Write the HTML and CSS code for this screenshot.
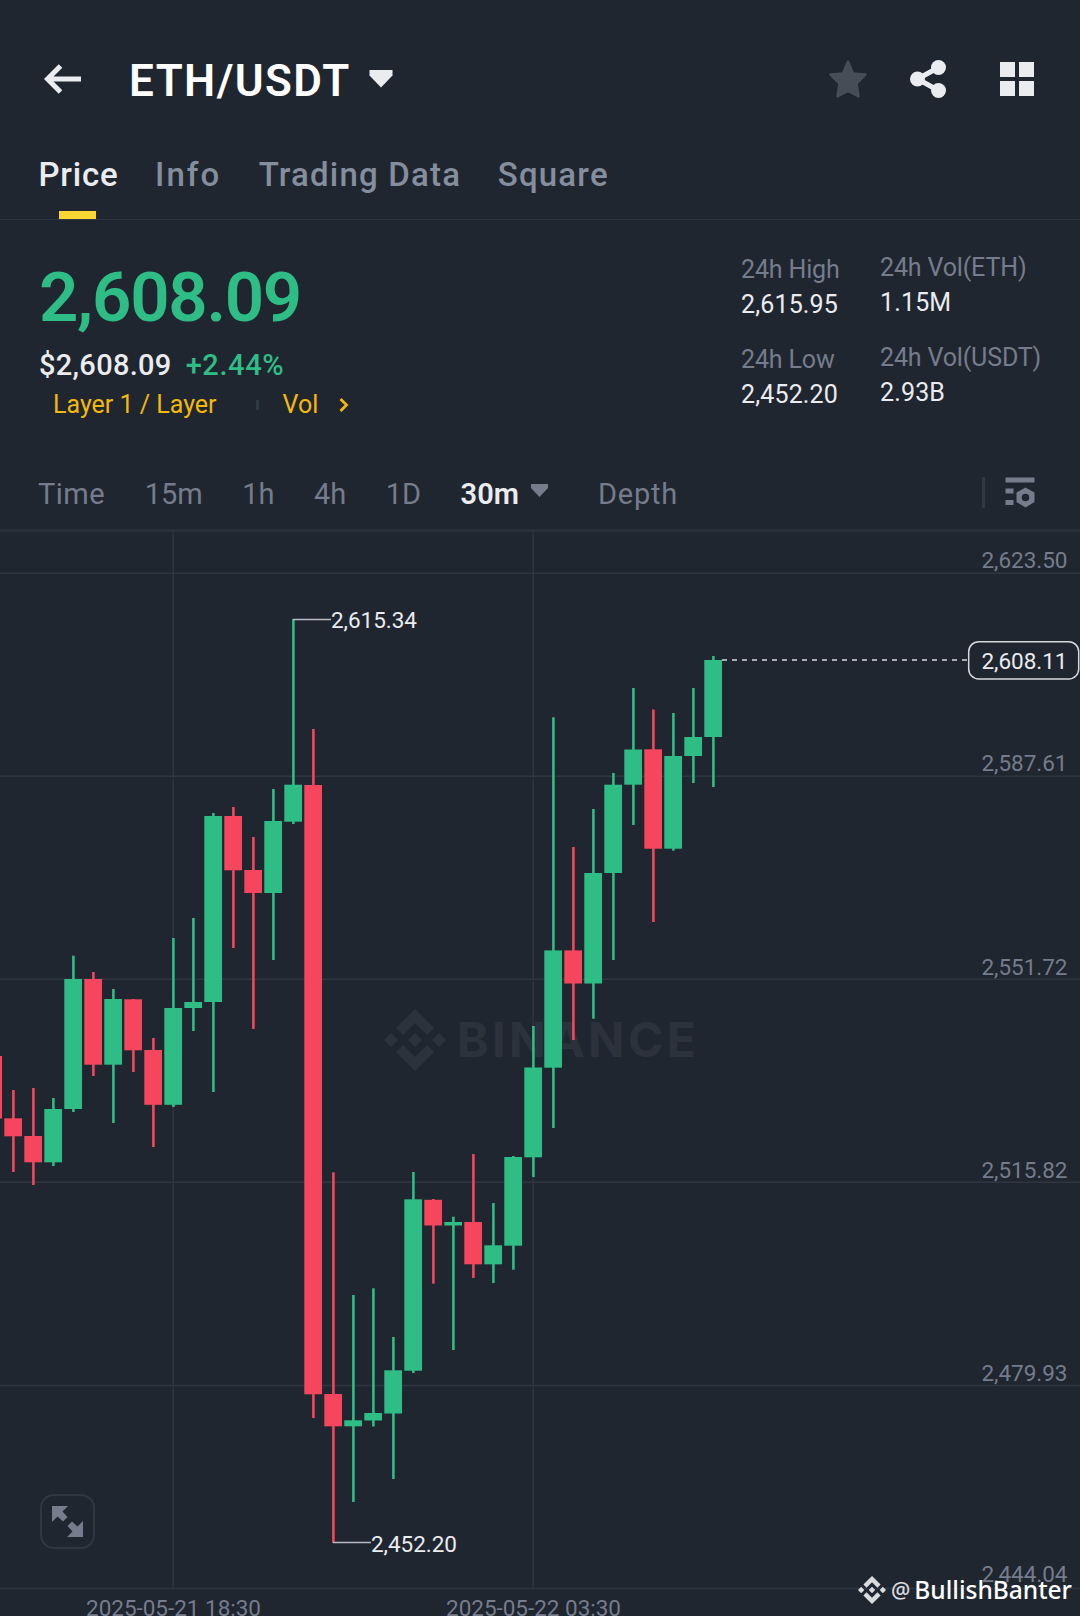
FILE: index.html
```html
<!DOCTYPE html>
<html lang="en">
<head>
    <meta charset="UTF-8">
    <meta name="viewport" content="width=device-width, initial-scale=1.0">
    <title>ETH/USDT</title>
    <link rel="stylesheet" href="styles.css">
</head>
<body>
    <header class="topbar">
        <svg class="back" width="38" height="30" viewBox="0 0 38 30">
            <path d="M37 15H4M16.500 2L3.500 15L16.500 28" fill="none" stroke="#eaecef" stroke-width="5"/>
        </svg>
        <h1>ETH/USDT</h1>
        <svg class="caret" width="24" height="18" viewBox="0 0 24 18">
            <path d="M0.500 0H23.500V5.500L12 17.500L0.500 5.500Z" fill="#eaecef"/>
        </svg>
        <div class="actions">
            <svg width="38" height="38" viewBox="0 0 38 38">
                <path d="M19 1.500L24 13.500L36.500 14.500L27.500 23.500L29.500 36.500L19 31L8.500 36.500L10.500 23.500L1.500 14.500L14 13.500Z" fill="#474d57" stroke="#474d57" stroke-width="2.500" stroke-linejoin="round"/>
            </svg>
            <svg width="36" height="38" viewBox="0 0 36 38">
                <path d="M28.500 7.500L7.500 19L28.500 30.500" fill="none" stroke="#eaecef" stroke-width="5"/>
                <circle cx="28.500" cy="7.500" r="7.500" fill="#eaecef"/>
                <circle cx="7.500" cy="19" r="7.500" fill="#eaecef"/>
                <circle cx="28.500" cy="30.500" r="7.500" fill="#eaecef"/>
            </svg>
            <svg width="34" height="34" viewBox="0 0 34 34">
                <path d="M0 0H15V15H0ZM19 0H34V15H19ZM0 19H15V34H0ZM19 19H34V34H19Z" fill="#eaecef"/>
            </svg>
        </div>
    </header>

    <nav class="tabs">
        <a class="active">Price</a>
        <a class="info">Info</a>
        <a>Trading Data</a>
        <a>Square</a>
    </nav>

    <section class="summary">
        <div class="quote">
            <div class="last">2,608.09</div>
            <div class="fiat"><span>$2,608.09</span><span class="change">+2.44%</span></div>
            <div class="tags">
                <span>Layer 1 / Layer</span>
                <i class="divider"></i>
                <span>Vol</span>
                <svg width="10" height="14" viewBox="0 0 10 14">
                    <path d="M1.500 1L7.500 7L1.500 13" fill="none" stroke="#f0b90b" stroke-width="2.800"/>
                </svg>
            </div>
        </div>
        <div class="stats">
            <dl>
                <dt>24h High</dt>
                <dd>2,615.95</dd>
                <dt>24h Low</dt>
                <dd>2,452.20</dd>
            </dl>
            <dl class="volume">
                <dt>24h Vol(ETH)</dt>
                <dd>1.15M</dd>
                <dt>24h Vol(USDT)</dt>
                <dd>2.93B</dd>
            </dl>
        </div>
    </section>

    <nav class="intervals">
        <a class="time">Time</a>
        <a>15m</a>
        <a>1h</a>
        <a>4h</a>
        <a>1D</a>
        <a class="active">30m
            <svg width="17" height="13" viewBox="0 0 17 13"><path d="M0 0H17V4L8.500 13L0 4Z" fill="#757c8b"/></svg>
        </a>
        <a class="depth">Depth</a>
        <div class="settings">
            <svg width="30" height="31" viewBox="0 0 30 31">
                <path d="M0.500 0.500H29.500V5.500H0.500ZM0.500 11.500H8.500V16.500H0.500ZM0.500 23H8.500V28H0.500Z" fill="#757c8b"/>
                <path d="M20.500 10.500L29.500 15.500V25L20.500 30.500L11.500 25V15.500ZM20.500 16.700A3.800 3.800 0 1 0 20.500 24.300A3.800 3.800 0 1 0 20.500 16.700Z" fill="#757c8b" fill-rule="evenodd"/>
            </svg>
        </div>
    </nav>

    <main class="chart">
        <svg id="chart" width="1080" height="1084" viewBox="0 532 1080 1084">
            <defs>
                <path id="logo" d="M38.730 53.200l24.590-24.580 24.600 24.600 14.300-14.310L63.320 0l-38.900 38.900zM0 63.310l14.300-14.310 14.310 14.310-14.310 14.300zM38.730 73.410L63.320 98l24.600-24.600 14.310 14.290-38.900 38.910-38.910-38.880zM98 63.310l14.300-14.310 14.310 14.300-14.310 14.320zM77.830 63.300L63.320 48.780 48.810 63.280l14.510 14.500z"/>
            </defs>
            <path class="grid" d="M0 573.300H1080M0 776.200H1080M0 979.300H1080M0 1182.300H1080M0 1385.500H1080M0 1588.500H1080M173.200 532V1588M533.200 532V1588"/>
            <g class="watermark">
                <use href="#logo" transform="translate(384 1009) scale(0.490)"/>
                <text x="457" y="1057" textLength="239">BINANCE</text>
            </g>
            <g id="candles"></g>
            <path class="dash" d="M722 660H968"/>
            <path class="pointer" d="M293 619.500H331M333 1542.500H371"/>
            <rect class="pill" x="968.700" y="641.700" width="110" height="37.300" rx="10"/>
            <g class="marks">
                <text x="331" y="628" textLength="86">2,615.34</text>
                <text x="371" y="1552" textLength="86">2,452.20</text>
                <text x="981.500" y="669" textLength="86">2,608.11</text>
            </g>
            <g class="axis">
                <text x="981.500" y="568" textLength="86">2,623.50</text>
                <text x="981.500" y="771" textLength="86">2,587.61</text>
                <text x="981.500" y="974.500" textLength="86">2,551.72</text>
                <text x="981.500" y="1178" textLength="86">2,515.82</text>
                <text x="981.500" y="1381" textLength="86">2,479.93</text>
                <text x="981.500" y="1582" textLength="86">2,444.04</text>
                <text x="86" y="1616" textLength="175">2025-05-21 18:30</text>
                <text x="446" y="1616" textLength="175">2025-05-22 03:30</text>
            </g>
            <g class="expand">
                <rect x="41" y="1495" width="53" height="53" rx="13"/>
                <path d="M52 1506H68L62.500 1511.500L67.500 1517L63 1521.500L57.500 1516.500L52 1522ZM83 1537H67L72.500 1531.500L67.500 1526L72 1521.500L77.500 1526.500L83 1521Z"/>
            </g>
        </svg>
        <div class="author">
            <svg width="28" height="28" viewBox="0 0 126.600 126.600"><use href="#logo"/></svg>
            <span class="at">@</span>
            <span>BullishBanter</span>
        </div>
    </main>

    <script src="chart.js"></script>
</body>
</html>
```
FILE: styles.css
```css
* {
    box-sizing: border-box;
}

body {
    margin: 0;
    width: 1080px;
    height: 1616px;
    overflow: hidden;
    background: #202630;
    color: #eaecef;
    font-family: Roboto, "Liberation Sans", sans-serif;
}

svg {
    display: block;
    flex: none;
}

.topbar {
    display: flex;
    align-items: center;
    height: 160px;
    padding: 0 46px 2px 44px;
}

.topbar h1 {
    margin: 4px 0 0 47px;
    color: #fff;
    font-size: 44px;
    font-weight: 600;
    letter-spacing: 1.4px;
    line-height: 52px;
}

.caret {
    margin-left: 18px;
}

.actions {
    display: flex;
    align-items: center;
    margin-left: auto;
}

.actions svg:nth-child(2) {
    margin: 0 54px 0 43px;
}

/* page tabs */
.tabs {
    display: flex;
    gap: 36.5px;
    height: 60px;
    padding-left: 38.5px;
    border-bottom: 1px solid #2f3641;
    color: #848e9c;
    font-size: 33px;
    font-weight: 500;
    letter-spacing: 1.2px;
    line-height: 29px;
}

.tabs a {
    position: relative;
    height: 59px;
}

.tabs .active {
    color: #eaecef;
    letter-spacing: 0.8px;
}

.tabs .info {
    margin-right: 1px;
    letter-spacing: 2px;
}

.tabs .active::after {
    content: "";
    position: absolute;
    left: 20.5px;
    bottom: 0;
    width: 37px;
    height: 8px;
    background: #fcd535;
}

/* price summary */
.summary {
    display: flex;
    justify-content: space-between;
    height: 239px;
    padding: 40px 39px 0 39px;
}

.last {
    color: #2ebd85;
    font-size: 69px;
    font-weight: 600;
    line-height: 76px;
    letter-spacing: -1.3px;
}

.fiat {
    display: flex;
    gap: 14px;
    margin-top: 12px;
    font-size: 29px;
    font-weight: 500;
    letter-spacing: 0.3px;
    line-height: 34px;
}

.change {
    color: #2ebd85;
    letter-spacing: 0.6px;
}

.tags {
    display: flex;
    align-items: center;
    margin-top: 9px;
    padding-left: 14px;
    color: #f0b90b;
    font-size: 25px;
    line-height: 28px;
}

.divider {
    width: 3px;
    height: 10px;
    margin: 0 24px 0 39px;
    background: #2f3944;
}

.tags svg {
    margin-left: 21px;
}

.stats {
    display: flex;
    gap: 41px;
    margin-top: -8px;
    font-size: 25px;
    line-height: 35px;
}

.stats dl,
.stats dd {
    margin: 0;
}

.stats dl {
    width: 98px;
    white-space: nowrap;
}

.stats .volume {
    width: 161px;
    margin-top: -2px;
}

.stats dt {
    color: #757c8b;
    letter-spacing: -0.15px;
}

.stats dd {
    margin-bottom: 20px;
    letter-spacing: 0.15px;
}

/* interval bar */
.intervals {
    display: flex;
    align-items: center;
    gap: 39.5px;
    height: 73px;
    padding: 0 45px 0 38px;
    border-bottom: 3px solid #29303a;
    color: #757c8b;
    font-size: 29px;
    line-height: 34px;
}

.time {
    letter-spacing: 0.5px;
}

.intervals .active {
    display: flex;
    gap: 12px;
    color: #eaecef;
    font-weight: 600;
}

.intervals .active svg {
    margin-top: 7px;
}

.depth {
    margin-left: 10.5px;
    letter-spacing: 0.8px;
}

.settings {
    margin: -4px 0 0 auto;
    padding-left: 20px;
    border-left: 3px solid #2f3944;
}

/* candlestick chart */
.chart {
    position: relative;
}

.chart text {
    font-size: 22.500px;
}

.grid {
    fill: none;
    stroke: #2f3641;
    stroke-width: 1.500;
}

.watermark {
    fill: #2c323c;
}

.chart .watermark text {
    font-family: Inter, sans-serif;
    font-size: 48px;
    font-weight: 700;
}

.up {
    fill: #2ebd85;
}

.down {
    fill: #f6465d;
}

.dash {
    stroke: #d5d8dd;
    stroke-width: 1.600;
    stroke-dasharray: 5 5;
}

.pointer {
    fill: none;
    stroke: #b7bbc2;
    stroke-width: 1.600;
}

.pill {
    fill: #202630;
    stroke: #d5d8dd;
    stroke-width: 1.500;
}

.marks {
    fill: #eaecef;
}

.axis {
    fill: #757c8b;
}

.expand rect {
    fill: #202630;
    stroke: #2f3741;
    stroke-width: 2;
}

.expand path {
    fill: #757c8b;
}

.author {
    position: absolute;
    right: 8px;
    bottom: 9px;
    display: flex;
    align-items: center;
    color: #fff;
    font-family: "Noto Sans", sans-serif;
    font-size: 24.5px;
    font-weight: 500;
    line-height: 34px;
}

.author svg {
    fill: #d9dbde;
}

.author .at {
    margin: 0 4px 0 5px;
    color: #d9dbde;
    font-size: 21.5px;
}
```
FILE: chart.js
```js
// [direction, high, body top, body bottom, low]
const candles = [
    ['down', 1056, 1056, 1118.5, 1118.5],
    ['down', 1090, 1118.3, 1136.3, 1172],
    ['down', 1088, 1136, 1162.3, 1185],
    ['up', 1098, 1109, 1162.3, 1166],
    ['up', 955.7, 979, 1109, 1112],
    ['down', 972, 979, 1064.7, 1076],
    ['up', 989, 999, 1064.7, 1123],
    ['down', 999, 999.3, 1050.3, 1072],
    ['down', 1038, 1050, 1104.8, 1147],
    ['up', 938, 1008, 1104.8, 1107],
    ['up', 918, 1002, 1008, 1031],
    ['up', 813, 816, 1002, 1092],
    ['down', 807, 816, 870.3, 948],
    ['down', 837, 870, 893, 1029],
    ['up', 789, 821, 893, 960],
    ['up', 619, 784.7, 821.7, 824],
    ['down', 729, 785, 1394.3, 1418],
    ['down', 1172.3, 1394, 1426.3, 1543],
    ['up', 1295, 1420.3, 1426.3, 1502],
    ['up', 1288.3, 1413, 1420.5, 1426.5],
    ['up', 1337, 1370.3, 1413.5, 1479],
    ['up', 1172, 1199.3, 1370.7, 1373],
    ['down', 1199, 1199.8, 1225.5, 1283.7],
    ['up', 1216.7, 1222, 1225.5, 1350],
    ['down', 1154, 1222, 1264.3, 1278],
    ['up', 1203, 1245.3, 1264.3, 1283],
    ['up', 1156, 1157, 1245.7, 1269.7],
    ['up', 1026, 1067.5, 1157.3, 1177],
    ['up', 717.3, 950.4, 1067.7, 1128],
    ['down', 847, 950.4, 983.5, 1040],
    ['up', 809, 873, 983.5, 1018.7],
    ['up', 773, 784.7, 873, 960],
    ['up', 688, 749.5, 784.7, 825],
    ['down', 709.5, 749.3, 848.7, 922],
    ['up', 713, 756, 848.7, 850.7],
    ['up', 688, 737, 756, 783],
    ['up', 656, 660, 737, 787]
];

const step = 20;
let shapes = '';

candles.forEach(([dir, high, top, bottom, low], i) => {
    const x = -6.7 + i * step;
    shapes += `<g class="${dir}">
        <rect x="${x - 1.2}" y="${high}" width="2.6" height="${low - high}"/>
        <rect x="${x - 9}" y="${top}" width="17.7" height="${bottom - top}"/>
    </g>`;
});

document.getElementById('candles').innerHTML = shapes;
```
